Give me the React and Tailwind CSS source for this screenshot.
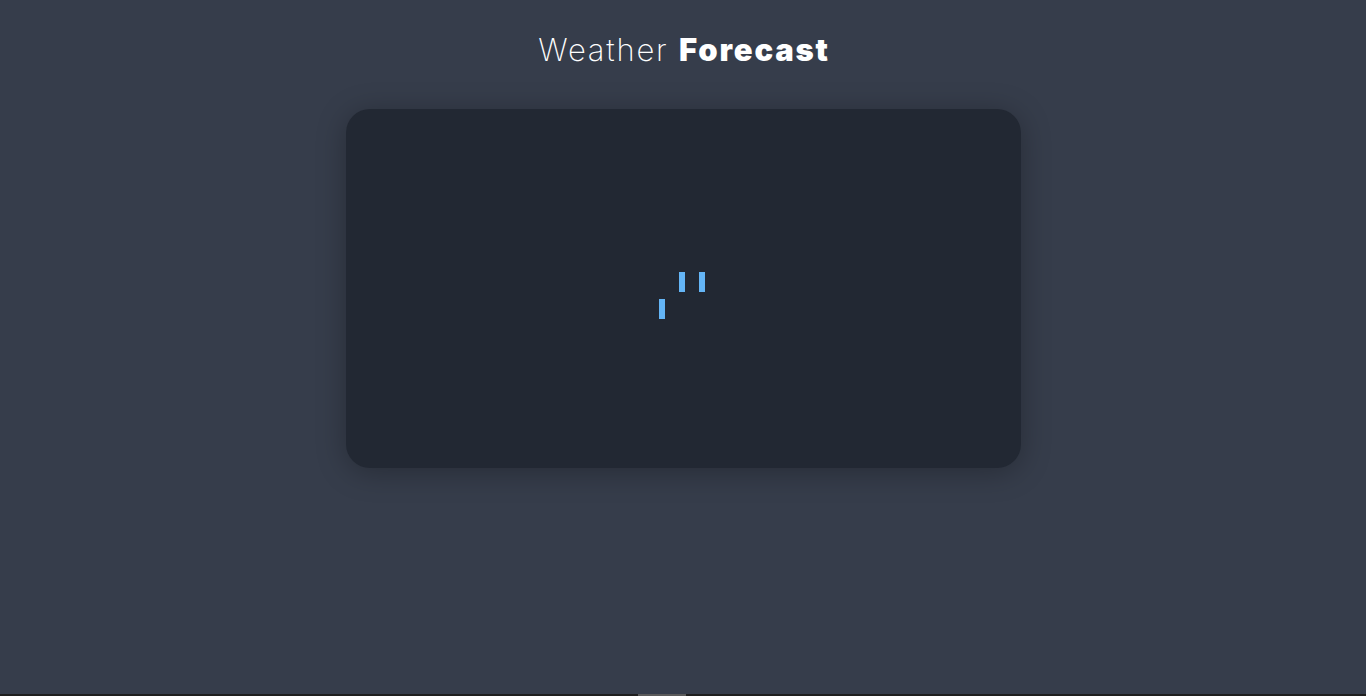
export default function App() {
  return (
    <div className="w-full h-[696px] bg-[#363d4b] flex flex-col overflow-hidden" style={{ fontFamily: "Inter, 'Open Sans', sans-serif" }}>
      <div className="flex-1 flex flex-col items-center">
        <h1 className="mt-[30px] h-[40px] text-[31px] leading-[40px] text-white tracking-[1.8px] pl-[2px]">
          <span className="font-extralight">Weather </span>
          <span className="font-black">Forecast</span>
        </h1>
        <div className="mt-[39px] w-[675px] h-[359px] rounded-[24px] bg-[#222833] shadow-[0_4px_30px_rgba(0,0,0,0.28)] flex items-center justify-center">
          <div className="flex gap-[14px] items-start h-[47px] pt-[7px] ml-[-2px]">
            <div className="w-[6px] h-[20px] bg-[#64b5f6] mt-[27px]" />
            <div className="w-[6px] h-[20px] bg-[#64b5f6]" />
            <div className="w-[6px] h-[20px] bg-[#64b5f6]" />
          </div>
        </div>
      </div>
      <div className="h-[2px] bg-[#1f1f1f] flex">
        <div className="ml-[638px] w-[48px] h-full bg-[#5a5a5a]" />
      </div>
    </div>
  );
}
